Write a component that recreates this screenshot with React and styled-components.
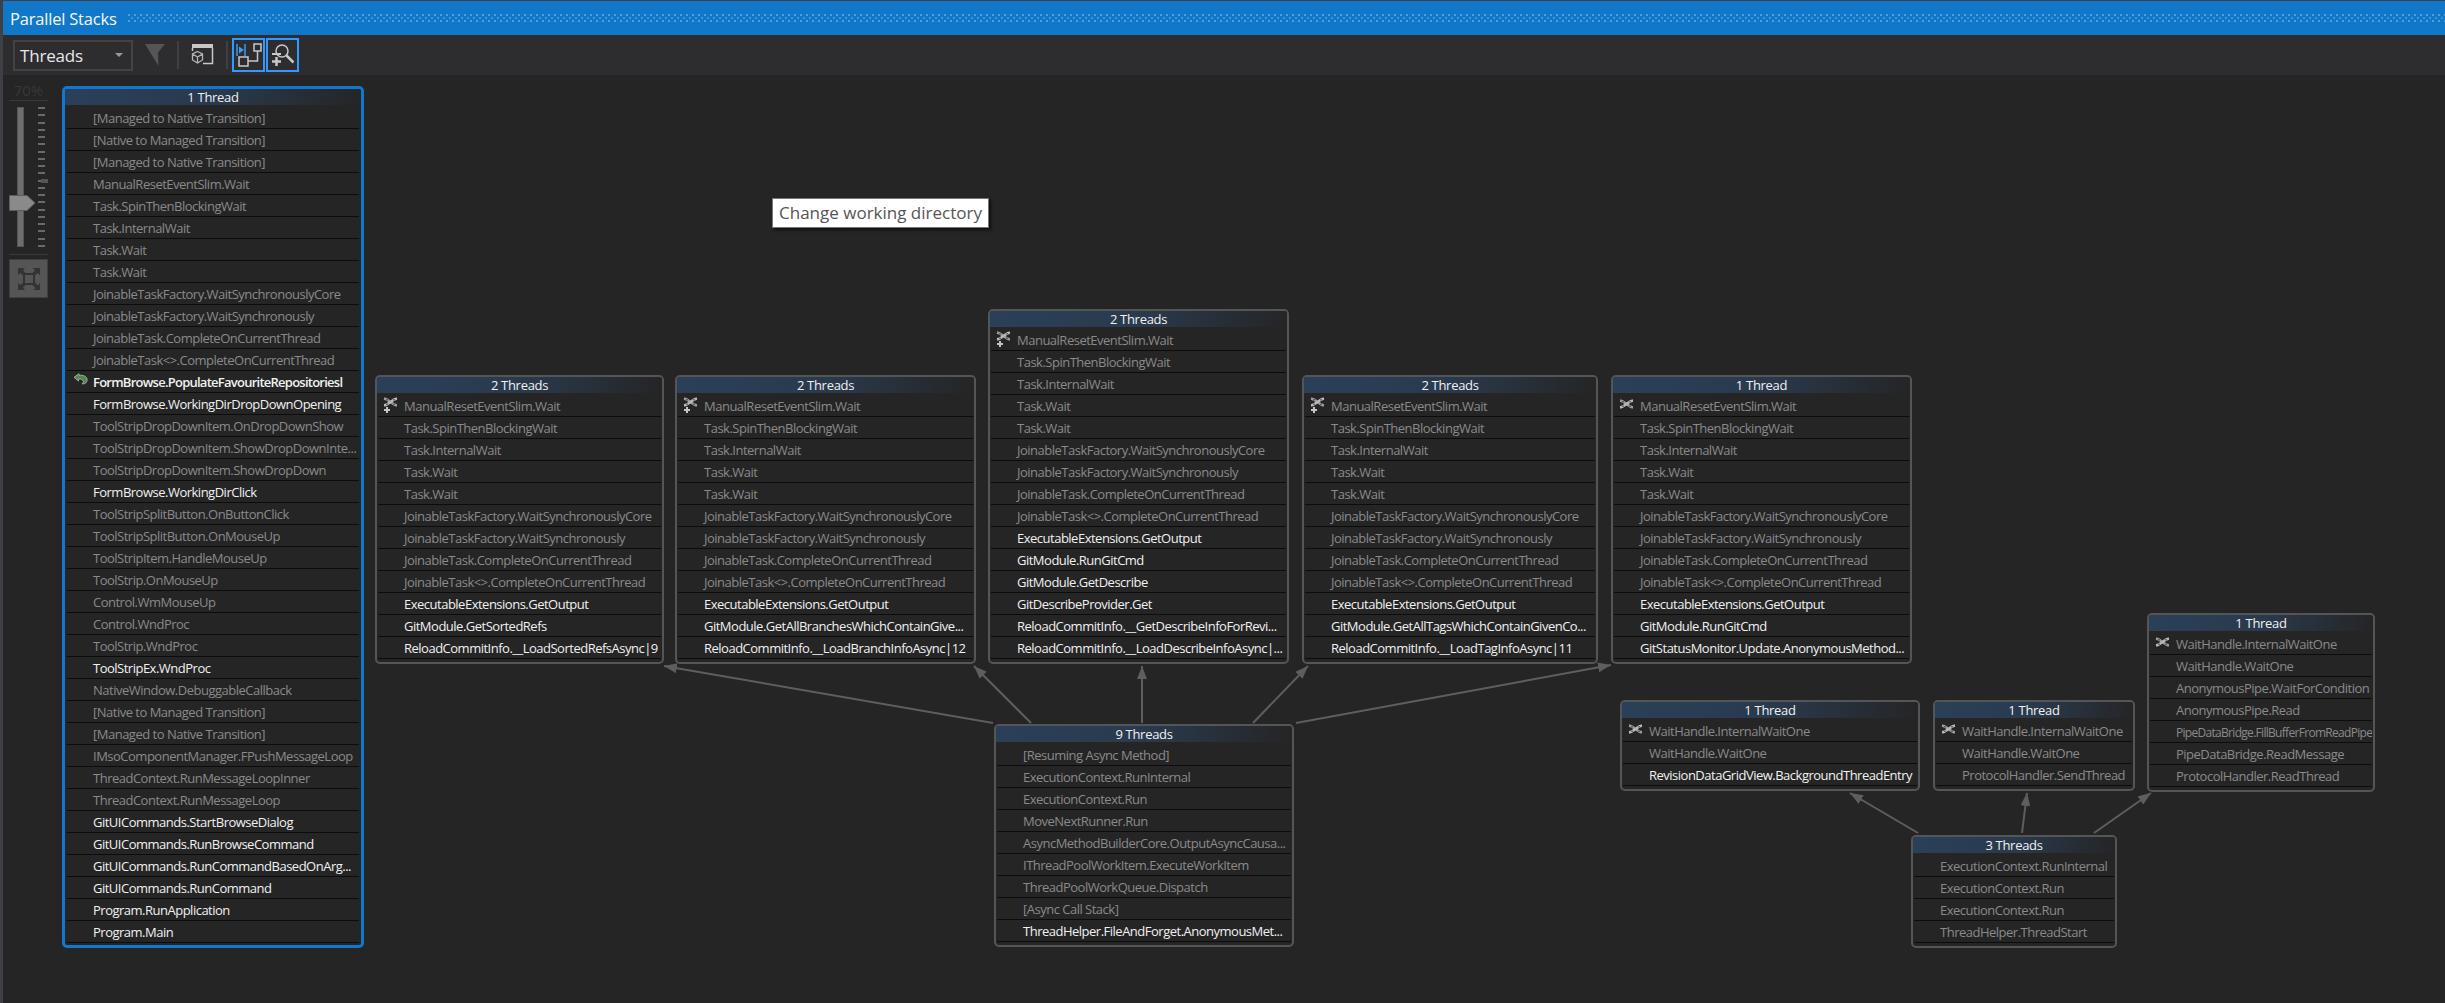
import React from "react";
import styled, { createGlobalStyle } from "styled-components";

const ORIGIN_X = 56;
const ORIGIN_Y = 75;

const waitStack = [
  "Task.SpinThenBlockingWait",
  "Task.InternalWait",
  "Task.Wait",
  "Task.Wait",
  "JoinableTaskFactory.WaitSynchronouslyCore",
  "JoinableTaskFactory.WaitSynchronously",
  "JoinableTask.CompleteOnCurrentThread",
  "JoinableTask<>.CompleteOnCurrentThread",
];

const dim = (text) => ({ text });
const on = (text) => ({ text, bright: true });

const cards = [
  {
    x: 375, y: 375, w: 289, title: "2 Threads",
    rows: [
      { text: "ManualResetEventSlim.Wait", icon: "plus" },
      ...waitStack.map(dim),
      on("ExecutableExtensions.GetOutput"),
      on("GitModule.GetSortedRefs"),
      on("ReloadCommitInfo.__LoadSortedRefsAsync|9"),
    ],
  },
  {
    x: 675, y: 375, w: 301, title: "2 Threads",
    rows: [
      { text: "ManualResetEventSlim.Wait", icon: "plus" },
      ...waitStack.map(dim),
      on("ExecutableExtensions.GetOutput"),
      on("GitModule.GetAllBranchesWhichContainGive..."),
      on("ReloadCommitInfo.__LoadBranchInfoAsync|12"),
    ],
  },
  {
    x: 988, y: 309, w: 301, title: "2 Threads",
    rows: [
      { text: "ManualResetEventSlim.Wait", icon: "plus" },
      ...waitStack.map(dim),
      on("ExecutableExtensions.GetOutput"),
      on("GitModule.RunGitCmd"),
      on("GitModule.GetDescribe"),
      on("GitDescribeProvider.Get"),
      on("ReloadCommitInfo.__GetDescribeInfoForRevi..."),
      on("ReloadCommitInfo.__LoadDescribeInfoAsync|..."),
    ],
  },
  {
    x: 1302, y: 375, w: 296, title: "2 Threads",
    rows: [
      { text: "ManualResetEventSlim.Wait", icon: "plus" },
      ...waitStack.map(dim),
      on("ExecutableExtensions.GetOutput"),
      on("GitModule.GetAllTagsWhichContainGivenCo..."),
      on("ReloadCommitInfo.__LoadTagInfoAsync|11"),
    ],
  },
  {
    x: 1611, y: 375, w: 301, title: "1 Thread",
    rows: [
      { text: "ManualResetEventSlim.Wait", icon: "cross" },
      ...waitStack.map(dim),
      on("ExecutableExtensions.GetOutput"),
      on("GitModule.RunGitCmd"),
      on("GitStatusMonitor.Update.AnonymousMethod..."),
    ],
  },
  {
    x: 994, y: 724, w: 300, title: "9 Threads",
    rows: [
      dim("[Resuming Async Method]"),
      dim("ExecutionContext.RunInternal"),
      dim("ExecutionContext.Run"),
      dim("MoveNextRunner.Run"),
      dim("AsyncMethodBuilderCore.OutputAsyncCausa..."),
      dim("IThreadPoolWorkItem.ExecuteWorkItem"),
      dim("ThreadPoolWorkQueue.Dispatch"),
      dim("[Async Call Stack]"),
      on("ThreadHelper.FileAndForget.AnonymousMet..."),
    ],
  },
  {
    x: 1620, y: 700, w: 300, title: "1 Thread",
    rows: [
      { text: "WaitHandle.InternalWaitOne", icon: "cross" },
      dim("WaitHandle.WaitOne"),
      on("RevisionDataGridView.BackgroundThreadEntry"),
    ],
  },
  {
    x: 1933, y: 700, w: 202, title: "1 Thread",
    rows: [
      { text: "WaitHandle.InternalWaitOne", icon: "cross" },
      dim("WaitHandle.WaitOne"),
      dim("ProtocolHandler.SendThread"),
    ],
  },
  {
    x: 2147, y: 613, w: 228, title: "1 Thread",
    rows: [
      { text: "WaitHandle.InternalWaitOne", icon: "cross" },
      dim("WaitHandle.WaitOne"),
      dim("AnonymousPipe.WaitForCondition"),
      dim("AnonymousPipe.Read"),
      { text: "PipeDataBridge.FillBufferFromReadPipe", tight: true },
      dim("PipeDataBridge.ReadMessage"),
      dim("ProtocolHandler.ReadThread"),
    ],
  },
  {
    x: 1911, y: 835, w: 206, title: "3 Threads",
    rows: [
      dim("ExecutionContext.RunInternal"),
      dim("ExecutionContext.Run"),
      dim("ExecutionContext.Run"),
      dim("ThreadHelper.ThreadStart"),
    ],
  },
];

const mainStack = [
  dim("[Managed to Native Transition]"),
  dim("[Native to Managed Transition]"),
  dim("[Managed to Native Transition]"),
  dim("ManualResetEventSlim.Wait"),
  ...waitStack.map(dim),
  { text: "FormBrowse.PopulateFavouriteRepositoriesl", bright: true, bold: true, icon: "current" },
  on("FormBrowse.WorkingDirDropDownOpening"),
  dim("ToolStripDropDownItem.OnDropDownShow"),
  dim("ToolStripDropDownItem.ShowDropDownInte..."),
  dim("ToolStripDropDownItem.ShowDropDown"),
  on("FormBrowse.WorkingDirClick"),
  dim("ToolStripSplitButton.OnButtonClick"),
  dim("ToolStripSplitButton.OnMouseUp"),
  dim("ToolStripItem.HandleMouseUp"),
  dim("ToolStrip.OnMouseUp"),
  dim("Control.WmMouseUp"),
  dim("Control.WndProc"),
  dim("ToolStrip.WndProc"),
  on("ToolStripEx.WndProc"),
  dim("NativeWindow.DebuggableCallback"),
  dim("[Native to Managed Transition]"),
  dim("[Managed to Native Transition]"),
  dim("IMsoComponentManager.FPushMessageLoop"),
  dim("ThreadContext.RunMessageLoopInner"),
  dim("ThreadContext.RunMessageLoop"),
  on("GitUICommands.StartBrowseDialog"),
  on("GitUICommands.RunBrowseCommand"),
  on("GitUICommands.RunCommandBasedOnArg..."),
  on("GitUICommands.RunCommand"),
  on("Program.RunApplication"),
  on("Program.Main"),
];

const arrows = [
  [993, 723, 664, 666],
  [1031, 723, 974, 666],
  [1142, 723, 1142, 666],
  [1253, 723, 1308, 666],
  [1296, 723, 1611, 665],
  [1918, 833, 1850, 793],
  [2022, 833, 2027, 793],
  [2094, 833, 2151, 793],
];

const ticks = Array.from({ length: 20 }, (_, i) => i);

function CrossIcon({ plus }) {
  return (
    <svg width="17" height="17" viewBox="0 0 17 17" fill="none">
      <path d="M1 1.500c3 .5 4 1.500 6.500 3.500s3.500 3 6.500 3.500" stroke="#9c9c9c" strokeWidth="2.400" />
      <path d="M1 8.500c3-.5 4-1.500 6.500-3.500s3.500-3 6.500-3.500" stroke="#b8b8b8" strokeWidth="2.400" />
      <path d="M4 2v1.500M11 6.500V8M4 6.500V8M11 2v1.500" stroke="#252526" strokeWidth="1" />
      {plus && <path d="M4 10v6M1 13h6" stroke="#c4c4c4" strokeWidth="2" />}
    </svg>
  );
}

function CurrentIcon() {
  return (
    <svg width="15" height="13" viewBox="0 0 15 13">
      <path
        d="M6 .8 1 4.300 5.500 8V6c2.500-.3 4 .4 5 2.500-.2 1-.8 1.700-1.500 2.300 3.500.6 5.500-2 5-4.800-.5-2.700-3.500-4-8-3.700z"
        fill="#4f8a4c"
        stroke="#a8a8a8"
        strokeWidth="1"
      />
    </svg>
  );
}

function Row({ row }) {
  return (
    <RowLine>
      {row.icon && (
        <RowIcon $kind={row.icon}>
          {row.icon === "current" ? <CurrentIcon /> : <CrossIcon plus={row.icon === "plus"} />}
        </RowIcon>
      )}
      <RowText $bright={row.bright} $bold={row.bold} $tight={row.tight}>
        {row.text}
      </RowText>
    </RowLine>
  );
}

function StackCard({ x, y, w, title, rows, active }) {
  return (
    <Card $x={x} $y={y} $w={w} $active={active}>
      <CardHeader>{title}</CardHeader>
      <Rows $active={active}>
        {rows.map((row, i) => (
          <Row key={i} row={row} />
        ))}
      </Rows>
    </Card>
  );
}

function App() {
  return (
    <Window>
      <GlobalStyle />
      <TitleBar>
        <TitleText>Parallel Stacks</TitleText>
        <Gripper />
      </TitleBar>
      <Toolbar>
        <Combo>
          <span>Threads</span>
          <ComboArrow />
        </Combo>
        <FilterButton>
          <svg width="20" height="22" viewBox="0 0 20 22">
            <path d="M0 0h20l-7 8.500L13.500 22z" fill="#555" />
          </svg>
        </FilterButton>
        <ToolSeparator />
        <PlainTool>
          <svg width="23" height="22" viewBox="0 0 23 22" fill="none">
            <path d="M1 0h21v4H1z" fill="#c8c8c8" />
            <path d="M1.500 4v3M21.500 4v15.500H12" stroke="#c8c8c8" strokeWidth="1.500" />
            <path
              d="M6.500 7.500 11.500 10v6l-5 3-5-3v-6zM1.500 10l5 3 5-3M6.500 13v6"
              stroke="#b4b4b4"
              strokeWidth="1.300"
            />
          </svg>
        </PlainTool>
        <ToolSeparator />
        <ToggleGroup>
          <ToggleButton>
            <svg width="26" height="24" viewBox="0 0 26 24" fill="none">
              <path d="M1 1v12M9 1v12" stroke="#3f9bec" strokeWidth="1.500" />
              <path d="M3 3.500 8 7l-5 3.500z" fill="#3f9bec" />
              <rect x="18" y="1" width="7" height="7" stroke="#c8c8c8" strokeWidth="1.500" />
              <rect x="3" y="14" width="9" height="9" stroke="#c8c8c8" strokeWidth="1.500" />
              <path d="M21.500 8v10H12" stroke="#c8c8c8" strokeWidth="1.500" />
            </svg>
          </ToggleButton>
          <ToggleButton>
            <svg width="24" height="24" viewBox="0 0 24 24" fill="none">
              <circle cx="11" cy="8" r="6" stroke="#c8c8c8" strokeWidth="1.500" />
              <path d="m15.500 12.500 7 7" stroke="#c8c8c8" strokeWidth="2.500" />
              <path d="M1 11h9" stroke="#c8c8c8" strokeWidth="2" />
              <path d="M5.500 14v9M1 18.500h9" stroke="#c8c8c8" strokeWidth="2.500" />
            </svg>
          </ToggleButton>
        </ToggleGroup>
      </Toolbar>
      <Workspace>
        <ZoomPanel>
          <ZoomLabel>70%</ZoomLabel>
          <ZoomRule />
          <SliderArea>
            <SliderTrack />
            <TickColumn>
              {ticks.map((t) => (
                <Tick key={t} />
              ))}
            </TickColumn>
            <CurrentTick />
            <SliderThumb>
              <svg width="27" height="16" viewBox="0 0 27 16">
                <path d="M.500.500H18L26 8l-8 7.500H.500z" fill="#8a8a8a" stroke="#5c5c5c" />
              </svg>
            </SliderThumb>
          </SliderArea>
          <ZoomRule />
          <FitButton>
            <svg width="24" height="24" viewBox="0 0 24 24" fill="none">
              <rect x="7" y="7" width="10" height="10" stroke="#333" strokeWidth="2" />
              <path
                d="M1 1h7L6 3.500 9 6.500 6.500 9 3.500 6 1 8zM23 1v7l-2.500-2-3 3L15 6.500l3-3L16 1zM23 23h-7l2.500-2-3-3 2.500-2.500 3 3 2-2.500zM1 23v-7l2.500 2 3-3L9 17.500l-3 3L8 23z"
                fill="#333"
              />
            </svg>
          </FitButton>
        </ZoomPanel>
        <Diagram>
          <StackCard x={62} y={86} w={302} title="1 Thread" rows={mainStack} active />
          {cards.map((card, i) => (
            <StackCard key={i} {...card} />
          ))}
          <ArrowLayer viewBox={`${ORIGIN_X} ${ORIGIN_Y} ${2445 - ORIGIN_X} ${1003 - ORIGIN_Y}`}>
            <defs>
              <marker
                id="head"
                markerUnits="userSpaceOnUse"
                markerWidth="13"
                markerHeight="10"
                refX="13"
                refY="5"
                orient="auto"
              >
                <path d="M0 0 13 5 0 10z" fill="#5e5e5e" />
              </marker>
            </defs>
            {arrows.map(([x1, y1, x2, y2], i) => (
              <line
                key={i}
                x1={x1}
                y1={y1}
                x2={x2}
                y2={y2}
                stroke="#5e5e5e"
                strokeWidth="2"
                markerEnd="url(#head)"
              />
            ))}
          </ArrowLayer>
          <Tip>Change working directory</Tip>
        </Diagram>
      </Workspace>
    </Window>
  );
}

export default App;

const GlobalStyle = createGlobalStyle`
  html, body {
    margin: 0;
    padding: 0;
    background: #252526;
  }
`;

const Window = styled.div`
  width: 2445px;
  height: 1003px;
  box-sizing: border-box;
  display: flex;
  flex-direction: column;
  overflow: hidden;
  border-left: 3px solid #3f3f46;
  background: #252526;
  font-family: "Open Sans", "Noto Sans", sans-serif;
`;

const TitleBar = styled.div`
  height: 34px;
  margin-top: 1px;
  flex: none;
  display: flex;
  align-items: center;
  background: #1177c8;
  box-shadow: 0 -1px 0 #3f3f46;
`;

const TitleText = styled.div`
  margin-left: 7px;
  color: #f4f8fc;
  font-size: 16.500px;
  letter-spacing: -0.2px;
  white-space: nowrap;
`;

const Gripper = styled.div`
  flex: 1;
  height: 8px;
  margin-left: 11px;
  background-image:
    linear-gradient(90deg, #4f9fda 2px, transparent 2px),
    linear-gradient(90deg, #3d92d3 2px, transparent 2px),
    linear-gradient(90deg, #4f9fda 2px, transparent 2px);
  background-size: 6px 2px;
  background-repeat: repeat-x;
  background-position: 0 0, 3px 3px, 0 6px;
`;

const Toolbar = styled.div`
  height: 40px;
  flex: none;
  display: flex;
  align-items: center;
  background: #2d2d30;
  padding-left: 10px;
  box-sizing: border-box;
`;

const Combo = styled.div`
  width: 120px;
  height: 31px;
  box-sizing: border-box;
  border: 2px solid #434346;
  display: flex;
  align-items: center;
  justify-content: space-between;
  padding: 0 8px 0 5px;
  color: #e8e8e8;
  font-size: 17px;
  letter-spacing: -0.2px;
`;

const ComboArrow = styled.i`
  width: 0;
  height: 0;
  border-left: 4px solid transparent;
  border-right: 4px solid transparent;
  border-top: 4px solid #999;
`;

const FilterButton = styled.div`
  margin-left: 12px;
  width: 20px;
  height: 22px;
  display: flex;
`;

const ToolSeparator = styled.div`
  width: 2px;
  height: 28px;
  margin: 0 12px;
  background: #3f3f46;
`;

const PlainTool = styled.div`
  width: 23px;
  height: 22px;
  display: flex;
`;

const ToggleGroup = styled.div`
  display: flex;
  gap: 1px;
  margin-left: -8px;
`;

const ToggleButton = styled.div`
  width: 33px;
  height: 34px;
  box-sizing: border-box;
  border: 2px solid #3399ff;
  display: flex;
  align-items: center;
  justify-content: center;
`;

const Workspace = styled.div`
  flex: 1;
  display: flex;
  min-height: 0;
`;

const ZoomPanel = styled.div`
  width: 53px;
  flex: none;
  box-sizing: border-box;
  padding: 5px 0 0 6px;
  display: flex;
  flex-direction: column;
`;

const ZoomLabel = styled.div`
  width: 39px;
  height: 20px;
  line-height: 20px;
  text-align: center;
  color: #383838;
  font-size: 15px;
`;

const ZoomRule = styled.div`
  width: 39px;
  height: 1px;
  background: #3a3a3a;
`;

const SliderArea = styled.div`
  position: relative;
  width: 39px;
  height: 153px;
  padding: 6px 0 7px;
  box-sizing: border-box;
  display: flex;
`;

const SliderTrack = styled.div`
  width: 7px;
  margin-left: 8px;
  box-sizing: border-box;
  background: #6e6e6e;
  border: 1px solid #565656;
`;

const TickColumn = styled.div`
  width: 7px;
  margin-left: 14px;
  display: flex;
  flex-direction: column;
  justify-content: space-between;
`;

const Tick = styled.div`
  height: 2px;
  background: #6a6a6a;
`;

const CurrentTick = styled.div`
  position: absolute;
  left: 32px;
  top: 78px;
  width: 7px;
  height: 4px;
  background: #555;
`;

const SliderThumb = styled.div`
  position: absolute;
  left: 0;
  top: 94px;
  display: flex;
`;

const FitButton = styled.div`
  margin-top: 4px;
  width: 39px;
  height: 39px;
  box-sizing: border-box;
  background: #555;
  border: 1px solid #3f3f3f;
  display: flex;
  align-items: center;
  justify-content: center;
`;

const Diagram = styled.div`
  position: relative;
  flex: 1;
`;

const Card = styled.div`
  position: absolute;
  left: ${(p) => p.$x - ORIGIN_X}px;
  top: ${(p) => p.$y - ORIGIN_Y}px;
  width: ${(p) => p.$w}px;
  box-sizing: border-box;
  border: ${(p) => (p.$active ? "3px solid #1177d1" : "2px solid #555")};
  border-radius: 5px;
  background: #252526;
  overflow: hidden;
`;

const CardHeader = styled.div`
  height: 16px;
  line-height: 17px;
  text-align: center;
  color: #f1f1f1;
  font-size: 13px;
  letter-spacing: -0.3px;
  background: linear-gradient(90deg, #2a4059 0%, #2a3a4e 50%, #252526 100%);
`;

const Rows = styled.div`
  padding: 2px ${(p) => (p.$active ? "2px 2px" : "1px 3px")};
`;

const RowLine = styled.div`
  position: relative;
  height: 22px;
  box-sizing: border-box;
  border-bottom: 1px solid #0c0c0c;
  padding: 0 0 0 26px;
  overflow: hidden;
`;

const RowIcon = styled.span`
  position: absolute;
  left: ${(p) => (p.$kind === "current" ? "6px" : "5px")};
  top: ${(p) => (p.$kind === "cross" ? "4px" : p.$kind === "plus" ? "2px" : "2px")};
  display: flex;
`;

const RowText = styled.div`
  line-height: 23px;
  font-size: ${(p) => (p.$tight ? "12px" : "13px")};
  letter-spacing: ${(p) => (p.$bold ? "-0.75px" : p.$tight ? "-0.7px" : "-0.5px")};
  white-space: nowrap;
  color: ${(p) => (p.$bright ? "#f1f1f1" : "#8a8a8a")};
  font-weight: ${(p) => (p.$bold ? 600 : 400)};
`;

const ArrowLayer = styled.svg`
  position: absolute;
  left: 0;
  top: 0;
  width: ${2445 - ORIGIN_X}px;
  height: ${1003 - ORIGIN_Y}px;
  pointer-events: none;
`;

const Tip = styled.div`
  position: absolute;
  left: ${772 - ORIGIN_X}px;
  top: ${198 - ORIGIN_Y}px;
  width: 217px;
  height: 30px;
  box-sizing: border-box;
  border: 1px solid #767676;
  background: #fff;
  color: #555;
  font-size: 17px;
  line-height: 27px;
  text-align: center;
  white-space: nowrap;
  box-shadow: 2px 2px 3px rgba(0, 0, 0, 0.6);
`;
